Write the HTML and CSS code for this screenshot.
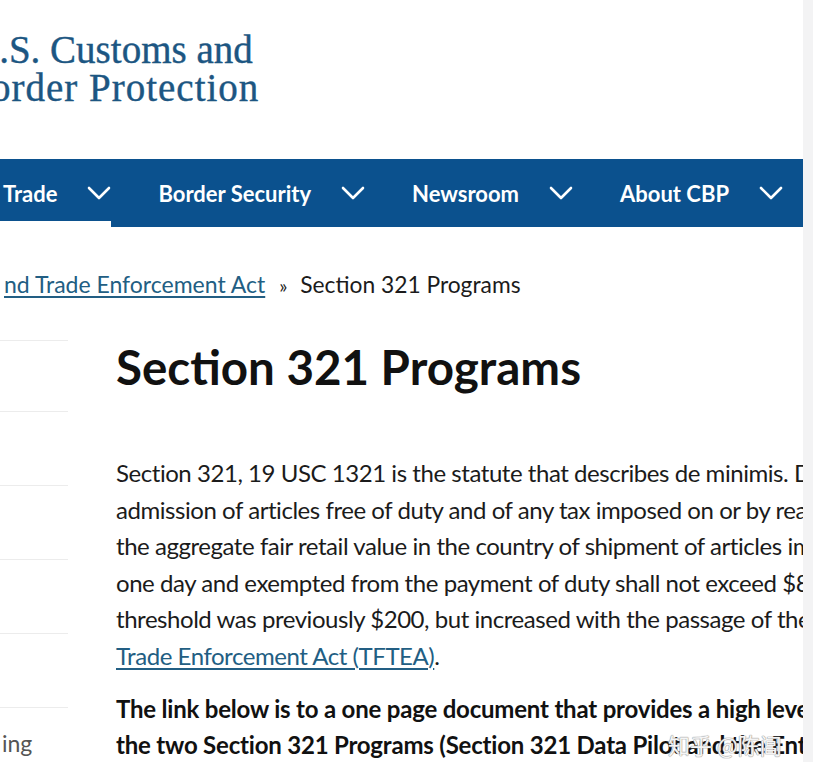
FILE: index.html
```html
<!DOCTYPE html>
<html lang="en">
<head>
<meta charset="utf-8">
<title>Section 321 Programs | U.S. Customs and Border Protection</title>
<link rel="stylesheet" href="styles.css">
</head>
<body>
<div class="page">
  <header class="header">
    <div class="logo">
      <span class="logo-l1">U.S. Customs and</span>
      <span class="logo-l2">Border Protection</span>
    </div>
  </header>
  <nav class="nav">
    <a class="nav-item active" href="#">Trade <svg class="chev" viewBox="0 0 24 14" width="24" height="14"><polyline points="2,2 12,12 22,2"/></svg></a>
    <a class="nav-item" href="#">Border Security <svg class="chev" viewBox="0 0 24 14" width="24" height="14"><polyline points="2,2 12,12 22,2"/></svg></a>
    <a class="nav-item" href="#">Newsroom <svg class="chev" viewBox="0 0 24 14" width="24" height="14"><polyline points="2,2 12,12 22,2"/></svg></a>
    <a class="nav-item" href="#">About CBP <svg class="chev" viewBox="0 0 24 14" width="24" height="14"><polyline points="2,2 12,12 22,2"/></svg></a>
  </nav>
  <div class="crumbs">
    <a href="#" class="crumb-link">nd Trade Enforcement Act</a>
    <span class="crumb-sep">»</span>
    <span class="crumb-cur">Section 321 Programs</span>
  </div>
  <div class="content">
    <aside class="side">
      <div class="side-item first"></div>
      <div class="side-item second"></div>
      <div class="side-item"></div>
      <div class="side-item"></div>
      <div class="side-item"></div>
      <div class="side-item"></div>
      <div class="side-item last">ing</div>
    </aside>
    <main class="main">
      <h1 class="title">Section 321 Programs</h1>
      <p class="para">
        <span class="ln">Section 321, 19 USC 1321 is the statute that describes de minimis. De minimis provides for the</span>
        <span class="ln">admission of articles free of duty and of any tax imposed on or by reason of importation, but</span>
        <span class="ln">the aggregate fair retail value in the country of shipment of articles imported by one person on</span>
        <span class="ln">one day and exempted from the payment of duty shall not exceed $800. The de minimis</span>
        <span class="ln">threshold was previously $200, but increased with the passage of the <a href="#" class="link">Trade Facilitation and</a></span>
        <span class="ln"><a href="#" class="link">Trade Enforcement Act (TFTEA)</a>.</span>
      </p>
      <p class="para bold">
        <span class="ln">The link below is to a one page document that provides a high level overview of</span>
        <span class="ln">the two Section 321 Programs (Section 321 Data Pilot and the Entry Type 86 Test).</span>
      </p>
    </main>
  </div>
  <div class="watermark">知乎 @陈阊</div>
</div>
</body>
</html>
```
FILE: styles.css
```css
html, body {
  margin: 0;
  padding: 0;
}
body {
  background: #f3f3f4;
  width: 813px;
  height: 762px;
  overflow: hidden;
  font-family: Lato, "Noto Sans", sans-serif;
  color: #1b1b1b;
}
.page {
  position: relative;
  width: 803px;
  height: 762px;
  background: #ffffff;
  overflow: hidden;
}
.header {
  height: 159px;
  box-sizing: border-box;
  padding-top: 31px;
}
.logo {
  font-family: "Liberation Serif", "DejaVu Serif", serif;
  font-size: 39px;
  line-height: 38px;
  color: #1c5682;
  -webkit-text-stroke: 0.4px #1c5682;
  white-space: nowrap;
}
.logo-l1 {
  display: block;
  margin-left: -29px;
}
.logo-l2 {
  display: block;
  margin-left: -36px;
  letter-spacing: 1px;
}
.nav {
  height: 68px;
  background: #0b518e;
  display: flex;
  align-items: stretch;
  gap: 47px;
}
.nav-item {
  display: flex;
  align-items: center;
  gap: 30px;
  box-sizing: border-box;
  height: 68px;
  color: #ffffff;
  text-decoration: none;
  font-weight: 700;
  font-size: 22px;
  white-space: nowrap;
}
.nav-item.active {
  padding-left: 3px;
  border-bottom: 6px solid #ffffff;
  padding-top: 6px;
}
.chev {
  display: block;
  fill: none;
  stroke: #ffffff;
  stroke-width: 2.6;
  stroke-linecap: round;
  stroke-linejoin: round;
}
.crumbs {
  padding: 42px 0 0 4px;
  height: 30px;
  line-height: 30px;
  font-size: 23px;
  white-space: nowrap;
}
.crumb-link {
  color: #225e83;
  text-decoration: underline;
  text-underline-offset: 3px;
}
.crumb-sep {
  margin: 0 7px 0 8px;
  font-size: 19px;
}
.crumb-cur {
  font-size: 22.8px;
}
.content {
  display: flex;
  gap: 48px;
}
.side {
  width: 68px;
  flex: none;
}
.side-item {
  height: 73px;
  border-bottom: 1px solid #ececec;
}
.side-item.first {
  height: 41px;
}
.side-item.second {
  height: 70px;
}
.side-item.last {
  border-bottom: none;
  padding-top: 20px;
  height: auto;
  font-size: 23px;
  color: #555555;
  line-height: 30px;
  padding-left: 2px;
}
.main {
  flex: 1;
  min-width: 0;
}
.title {
  margin: 39px 0 0 0;
  font-size: 47.5px;
  line-height: 1.2;
  font-weight: 700;
  color: #111111;
  white-space: nowrap;
}
.para {
  margin: 60px 0 0 0;
  font-size: 24px;
  letter-spacing: -0.45px;
  line-height: 36.6px;
  white-space: nowrap;
}
.para.bold {
  margin-top: 16px;
  font-weight: 700;
  letter-spacing: -0.2px;
  color: #111111;
}
.ln {
  display: block;
}
.link {
  color: #225e83;
  text-decoration: underline;
  text-underline-offset: 3px;
}
.watermark {
  position: absolute;
  left: 668px;
  top: 729px;
  font-family: "Noto Sans CJK SC", "Noto Sans", sans-serif;
  font-size: 22px;
  line-height: 30px;
  color: rgba(255, 255, 255, 0.92);
  text-shadow: 0 0 1px #9a9a9a, 0 0 1px #9a9a9a, 0 0 1px #9a9a9a;
  white-space: nowrap;
}
```
